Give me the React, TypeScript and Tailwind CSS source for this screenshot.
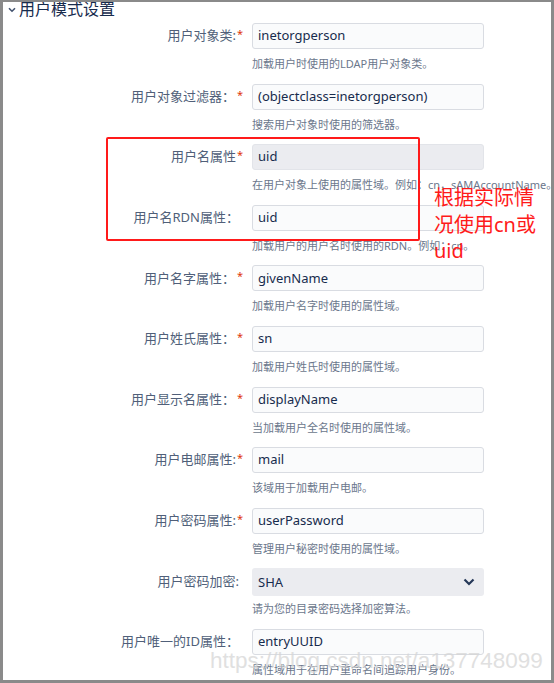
import React from "react";

type Row = {
  label: string;
  req?: "tight" | "space";
  value: string;
  help: string;
  kind?: "input" | "disabled" | "select";
};

const rows: Row[] = [
  { label: "用户对象类:", req: "tight", value: "inetorgperson", help: "加载用户时使用的LDAP用户对象类。" },
  { label: "用户对象过滤器：", req: "space", value: "(objectclass=inetorgperson)", help: "搜索用户对象时使用的筛选器。" },
  { label: "用户名属性", req: "tight", value: "uid", help: "在用户对象上使用的属性域。例如：cn，sAMAccountName。", kind: "disabled" },
  { label: "用户名RDN属性：", value: "uid", help: "加载用户的用户名时使用的RDN。例如：cn。" },
  { label: "用户名字属性：", req: "space", value: "givenName", help: "加载用户名字时使用的属性域。" },
  { label: "用户姓氏属性：", req: "space", value: "sn", help: "加载用户姓氏时使用的属性域。" },
  { label: "用户显示名属性：", req: "space", value: "displayName", help: "当加载用户全名时使用的属性域。" },
  { label: "用户电邮属性:", req: "tight", value: "mail", help: "该域用于加载用户电邮。" },
  { label: "用户密码属性:", req: "tight", value: "userPassword", help: "管理用户秘密时使用的属性域。" },
  { label: "用户密码加密:", value: "SHA", help: "请为您的目录密码选择加密算法。", kind: "select" },
  { label: "用户唯一的ID属性：", value: "entryUUID", help: "属性域用于在用户重命名间追踪用户身份。" },
];

const font = { fontFamily: '"Noto Sans", "Noto Sans CJK SC", sans-serif' };

export default function App() {
  return (
    <div
      className="relative w-[554px] h-[683px] overflow-hidden bg-white border-t-2 border-l-[3px] border-r-[3px] border-b-[3px] border-[#8a8a8a]"
      style={font}
    >
      <div className="flex items-center h-[16px] mt-[-1px] pl-[5px] gap-[3px]">
        <svg width="8" height="6" viewBox="0 0 8 6" className="mt-[1px]">
          <path d="M1 1.2 L4 4.2 L7 1.2" fill="none" stroke="#42526e" strokeWidth="1.6" />
        </svg>
        <span className="text-[16px] leading-[16px] text-[#172b4d]">用户模式设置</span>
      </div>

      <div className="flex flex-col pt-[6px]">
        {rows.map((r, i) => (
          <div key={i} className="flex h-[60.6px]">
            <div className="w-[240px] shrink-0 h-[26px] flex items-center justify-end text-[13px] text-[#505f79] whitespace-nowrap">
              <span className={r.req ? "" : "mr-[4px]"}>{r.label}</span>
              {r.req === "tight" && <span className="text-[#de350b] text-[11px] self-start mt-[3px] ml-[1px]">*</span>}
              {r.req === "space" && <span className="text-[#de350b] text-[11px] self-start mt-[3px] ml-[2px]">*</span>}
            </div>
            <div className="ml-[9px] flex flex-col">
              {r.kind === "select" ? (
                <div className="w-[232px] h-[28px] rounded-[3px] bg-[#ebecf0] flex items-center justify-between pl-[6px] pr-[9px] text-[13px] text-[#172b4d]">
                  <span>{r.value}</span>
                  <svg width="12" height="8" viewBox="0 0 12 8">
                    <path d="M1.5 1.5 L6 6 L10.5 1.5" fill="none" stroke="#253858" strokeWidth="2.2" />
                  </svg>
                </div>
              ) : (
                <div
                  className={
                    "w-[232px] h-[26px] rounded-[3px] border flex items-center px-[5px] text-[13px] text-[#172b4d] " +
                    (r.kind === "disabled"
                      ? "bg-[#ebecf0] border-[#e2e4e9]"
                      : "bg-[#fafbfc] border-[#d9dce2]")
                  }
                >
                  {r.value}
                </div>
              )}
              <div
                className={
                  "text-[11px] leading-[14px] text-[#6b778c] whitespace-nowrap " +
                  (r.kind === "select" ? "mt-[6px]" : "mt-[8px]")
                }
              >
                {r.help}
              </div>
            </div>
          </div>
        ))}
      </div>

      <div className="absolute left-[103px] top-[135px] w-[314px] h-[104px] border-2 border-[#ff1a1a] rounded-[2px]" />

      <div className="absolute left-[431px] top-[183px] text-[20px] leading-[26.5px] text-[#ff1a1a]">
        <div>根据实际情</div>
        <div>况使用cn或</div>
        <div>uid</div>
      </div>

      <div
        className="absolute left-[207px] top-[646px] text-[22.5px] leading-[26px] text-[#d6d6d6] opacity-75"
        style={{ fontFamily: '"Liberation Sans", sans-serif' }}
      >
        https://blog.csdn.net/a137748099
      </div>
    </div>
  );
}
